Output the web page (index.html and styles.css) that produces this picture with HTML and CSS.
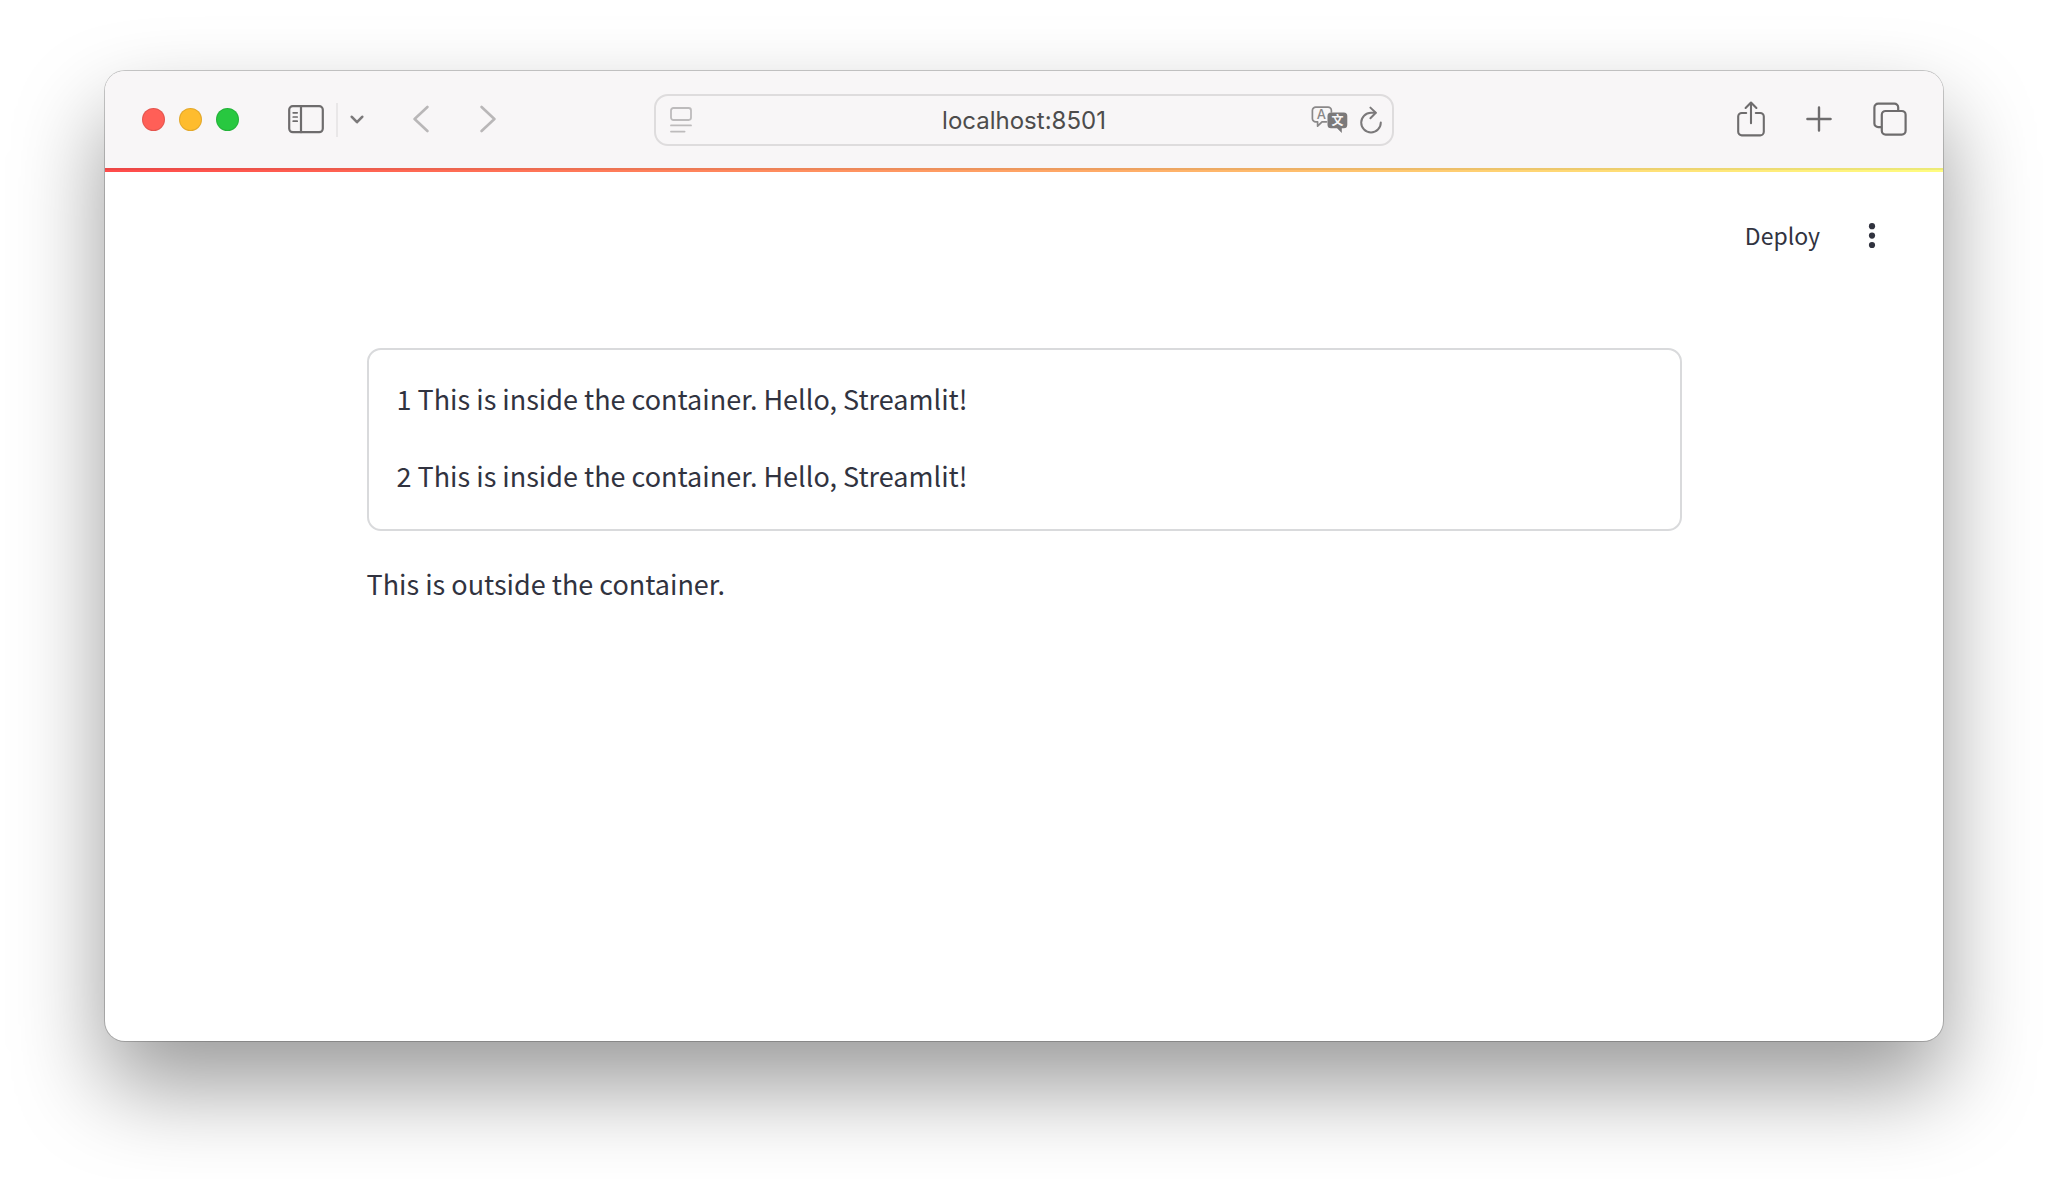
FILE: index.html
```html
<!DOCTYPE html>
<html lang="en">
<head>
    <meta charset="UTF-8">
    <meta name="viewport" content="width=device-width, initial-scale=1.0">
    <title>localhost:8501</title>
    <link rel="stylesheet" href="styles.css">
</head>
<body>
    <div class="window">
        <div class="toolbar">
            <div class="toolbar-left">
                <div class="lights">
                    <button class="light red" aria-label="Close"></button>
                    <button class="light yellow" aria-label="Minimize"></button>
                    <button class="light green" aria-label="Zoom"></button>
                </div>
                <div class="sidebar-group">
                    <button class="icon-button" aria-label="Sidebar">
                        <svg width="36" height="30" viewBox="0 0 36 30" fill="none" stroke="#6e6c6d" stroke-width="2.2" stroke-linecap="round">
                            <rect x="1.2" y="1.2" width="33.6" height="26" rx="3.6"/>
                            <path d="M13 1.2v26"/>
                            <path d="M5.2 7.8h4M5.2 12h4M5.2 16.2h4" stroke-width="1.7"/>
                        </svg>
                    </button>
                    <span class="divider"></span>
                    <button class="icon-button" aria-label="Tab groups">
                        <svg width="14" height="10" viewBox="0 0 14 10" fill="none" stroke="#7b797a" stroke-width="2.6" stroke-linecap="round" stroke-linejoin="round">
                            <path d="M1.8 1.8L7 7.2l5.2-5.4"/>
                        </svg>
                    </button>
                </div>
                <div class="history">
                    <button class="icon-button" aria-label="Back">
                        <svg width="16" height="30" viewBox="0 0 16 30" fill="none" stroke="#b9b7b8" stroke-width="2.6" stroke-linecap="round" stroke-linejoin="round">
                            <path d="M14.4 2L1.6 14l12.8 12"/>
                        </svg>
                    </button>
                    <button class="icon-button" aria-label="Forward">
                        <svg width="16" height="30" viewBox="0 0 16 30" fill="none" stroke="#b9b7b8" stroke-width="2.6" stroke-linecap="round" stroke-linejoin="round">
                            <path d="M1.6 2L14.4 14 1.6 26"/>
                        </svg>
                    </button>
                </div>
            </div>

            <div class="address">
                <button class="icon-button" aria-label="Page menu">
                    <svg width="22" height="26" viewBox="0 0 22 26" fill="none" stroke="#bdbbbc" stroke-width="1.8" stroke-linecap="round">
                        <rect x="1" y="1" width="20" height="12" rx="2.4"/>
                        <path d="M1 18.4h20M1 24.6h13.6"/>
                    </svg>
                </button>
                <input class="address-input" type="text" value="localhost:8501" aria-label="Address">
                <div class="address-actions">
                    <button class="icon-button" aria-label="Translate">
                        <svg width="37" height="28" viewBox="0 0 37 28">
                            <path d="M15.5 15.8H11l-4.4 4.4v-4.4H4.8A3.4 3.4 0 0 1 1.4 12.4V4.6A3.4 3.4 0 0 1 4.8 1.2H17a3.4 3.4 0 0 1 3.4 3.4V5.8" fill="none" stroke="#8a8889" stroke-width="1.7" stroke-linecap="round" stroke-linejoin="round"/>
                            <text x="10.4" y="13.4" class="glyph-latin">A</text>
                            <path d="M20 6.6H32.8a3.5 3.5 0 0 1 3.5 3.5V18.8a3.5 3.5 0 0 1-3.5 3.5H30.8V27L26 22.3H20a3.5 3.5 0 0 1-3.5-3.5V10.1A3.5 3.5 0 0 1 20 6.6z" fill="#7b797a"/>
                            <text x="26.4" y="18.6" class="glyph-han">文</text>
                        </svg>
                    </button>
                    <button class="icon-button" aria-label="Reload">
                        <svg width="22" height="28" viewBox="0 0 22 28" fill="none" stroke="#7b797a" stroke-width="2" stroke-linecap="round" stroke-linejoin="round">
                            <path d="M20.8 16.6A9.8 9.8 0 1 1 11 6.8H15.6"/>
                            <path d="M10.4 1.6L15.8 6.8 10.4 12.2"/>
                        </svg>
                    </button>
                </div>
            </div>

            <div class="toolbar-right">
                <button class="icon-button" aria-label="Share">
                    <svg width="28" height="38" viewBox="0 0 28 38" fill="none" stroke="#6e6c6d" stroke-width="2.1" stroke-linecap="round" stroke-linejoin="round">
                        <path d="M9.2 12H4.8A3.6 3.6 0 0 0 1.2 15.6V30.8a3.6 3.6 0 0 0 3.6 3.6H23.2a3.6 3.6 0 0 0 3.6-3.6V15.6A3.6 3.6 0 0 0 23.2 12H18.8"/>
                        <path d="M14 22.2V2M8.6 7L14 1.6 19.4 7"/>
                    </svg>
                </button>
                <button class="icon-button" aria-label="New tab">
                    <svg width="26" height="28" viewBox="0 0 26 28" fill="none" stroke="#6e6c6d" stroke-width="2.4" stroke-linecap="round">
                        <path d="M13 1.4v23.2M1.4 13h23.2"/>
                    </svg>
                </button>
                <button class="icon-button" aria-label="Tab overview">
                    <svg width="34" height="36" viewBox="0 0 34 36" fill="none" stroke="#6e6c6d" stroke-width="2.2" stroke-linejoin="round">
                        <path d="M8.6 25.2H5.2A3.8 3.8 0 0 1 1.4 21.4V5.4A3.8 3.8 0 0 1 5.2 1.6H21.4A3.8 3.8 0 0 1 25.2 5.4V8.8"/>
                        <rect x="8.8" y="9" width="23.8" height="23.6" rx="3.8"/>
                    </svg>
                </button>
            </div>
        </div>

        <div class="decoration"></div>

        <header class="app-header">
            <button class="deploy">Deploy</button>
            <button class="icon-button" aria-label="Main menu">
                <svg width="8" height="26" viewBox="0 0 8 26" fill="#31333f">
                    <circle cx="4" cy="3.2" r="3.1"/>
                    <circle cx="4" cy="12.6" r="3.1"/>
                    <circle cx="4" cy="22" r="3.1"/>
                </svg>
            </button>
        </header>

        <main class="app-main">
            <div class="container">
                <p>1 This is inside the container. Hello, Streamlit!</p>
                <p>2 This is inside the container. Hello, Streamlit!</p>
            </div>
            <p>This is outside the container.</p>
        </main>
    </div>
</body>
</html>
```
FILE: styles.css
```css
* {
    box-sizing: border-box;
}

body {
    margin: 0;
    padding: 71px 105px 138px;
    min-height: 100vh;
    display: flex;
    background-color: #ffffff;
    color: #31333f;
    font-family: "Noto Sans CJK SC", "Noto Sans", sans-serif;
}

p {
    margin: 0;
}

button {
    padding: 0;
    border: none;
    background: none;
    color: inherit;
    font-family: inherit;
    cursor: pointer;
}

.window {
    flex: 1;
    min-width: 0;
    border-radius: 20px;
    overflow: hidden;
    background-color: #ffffff;
    box-shadow: 0 0 0 1px rgba(0, 0, 0, 0.2), 0 45px 90px rgba(0, 0, 0, 0.4);
}

/* browser toolbar */
.toolbar {
    display: grid;
    grid-template-columns: 1fr minmax(0, 740px) 1fr;
    align-items: center;
    height: 97px;
    background-color: #f8f6f7;
}

.toolbar-left,
.toolbar-right,
.lights,
.sidebar-group,
.history,
.address-actions {
    display: flex;
    align-items: center;
}

.toolbar-left {
    gap: 49px;
    padding-left: 37px;
}

.toolbar-right {
    justify-content: flex-end;
    gap: 41px;
    padding-right: 36px;
}

.icon-button {
    display: flex;
    flex-shrink: 0;
}

.lights {
    gap: 14px;
}

.light {
    width: 23px;
    height: 23px;
    border-radius: 50%;
    border: 1px solid rgba(0, 0, 0, 0.1);
}

.red {
    background-color: #ff5f57;
}

.yellow {
    background-color: #febc2e;
}

.green {
    background-color: #28c840;
}

.sidebar-group {
    gap: 12px;
}

.divider {
    width: 2px;
    height: 34px;
    background-color: #e9e7e8;
}

.history {
    gap: 51px;
}

.address {
    display: grid;
    grid-template-columns: 70px 1fr 74px;
    align-items: center;
    height: 52px;
    padding: 0 10px 0 14px;
    border: 2px solid #dedcdd;
    border-radius: 14px;
}

.address-input {
    min-width: 0;
    padding: 1px 0 0;
    border: none;
    outline: none;
    background: none;
    color: #4d4c4c;
    font-family: Inter, sans-serif;
    font-size: 24px;
    text-align: center;
}

.address-actions {
    justify-content: flex-end;
    gap: 12px;
}

.glyph-latin {
    fill: #8a8889;
    font-family: Inter, sans-serif;
    font-size: 13px;
    font-weight: 500;
    text-anchor: middle;
}

.glyph-han {
    fill: #f8f6f7;
    font-size: 12px;
    font-weight: 700;
    text-anchor: middle;
}

/* app */
.decoration {
    height: 4px;
    background-image: linear-gradient(90deg, #ff4b4b, #fffd80);
    box-shadow: inset 0 2px rgba(0, 0, 0, 0.07);
}

.app-header {
    display: flex;
    justify-content: flex-end;
    align-items: center;
    gap: 48px;
    height: 128px;
    padding-right: 67px;
}

.deploy {
    padding-bottom: 2px;
    font-size: 23px;
    line-height: 36px;
}

.app-main {
    display: flex;
    flex-direction: column;
    gap: 30px;
    max-width: 1315px;
    margin: 0 auto;
    padding-top: 48px;
    font-size: 27px;
    line-height: 45px;
}

.container {
    display: flex;
    flex-direction: column;
    gap: 32px;
    padding: 26px 28px 31px;
    border: 2px solid #d9dadc;
    border-radius: 14px;
}
```
